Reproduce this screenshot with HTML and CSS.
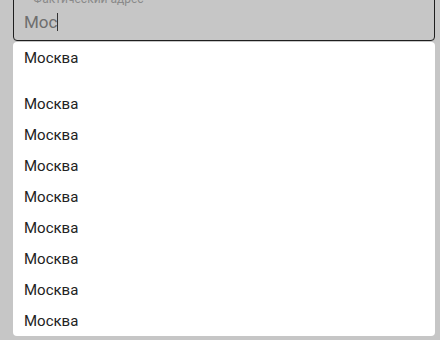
FILE: index.html
```html
<!DOCTYPE html>
<html>
<head>
<meta charset="utf-8">
<link rel="stylesheet" href="styles.css">
</head>
<body>
<div class="page">
  <div class="field">
    <span class="label">Фактический адрес</span>
    <div class="input"><span class="value">Мос</span><span class="caret"></span></div>
  </div>
  <ul class="menu">
    <li class="item first">Москва</li>
    <li class="item">Москва</li>
    <li class="item">Москва</li>
    <li class="item">Москва</li>
    <li class="item">Москва</li>
    <li class="item">Москва</li>
    <li class="item">Москва</li>
    <li class="item">Москва</li>
    <li class="item">Москва</li>
  </ul>
</div>
</body>
</html>
```
FILE: styles.css
```css
html, body {
  margin: 0;
  padding: 0;
  background: #c6c6c6;
  overflow: hidden;
  font-family: Roboto, "Liberation Sans", sans-serif;
}
.page {
  width: 422px;
  margin-left: 13px;
  margin-top: -17px;
}
.field {
  box-sizing: border-box;
  height: 58px;
  border: 1px solid #1e1e1e;
  border-radius: 4px;
  padding: 8px 10px 0 10px;
}
.label {
  display: block;
  font-size: 12px;
  line-height: 14px;
  color: #8a8a8a;
  padding-left: 9px;
}
.input {
  display: flex;
  align-items: center;
  height: 28px;
  margin-top: 2px;
}
.value {
  font-size: 17px;
  color: #6e6e6e;
}
.caret {
  width: 1px;
  height: 18px;
  background: #333;
}
.menu {
  list-style: none;
  margin: 1px 0 0 0;
  padding: 0;
  background: #fff;
  border-radius: 4px;
}
.item {
  height: 31px;
  line-height: 33px;
  padding-left: 11px;
  font-size: 15px;
  color: #222;
}
.item.first {
  margin-bottom: 15px;
}
```
